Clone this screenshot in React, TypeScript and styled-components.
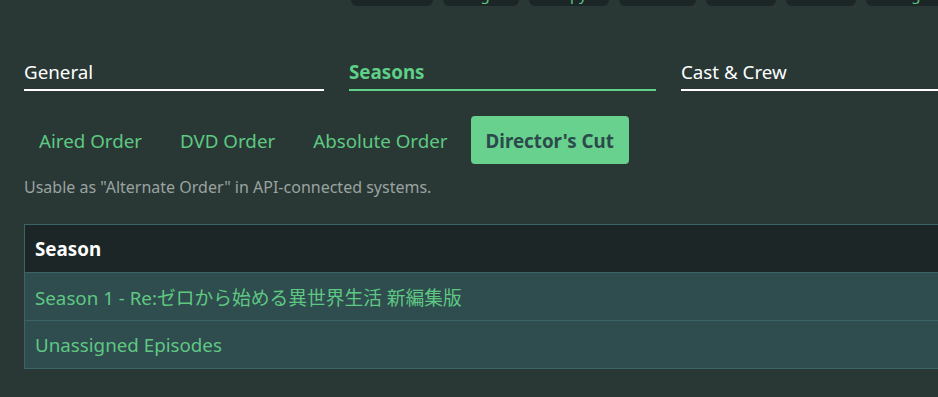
import React, { FC, useState } from 'react';
import styled, { createGlobalStyle } from 'styled-components';

const GlobalStyle = createGlobalStyle`
  html, body {
    margin: 0;
    padding: 0;
    background-color: #293835;
    overflow: hidden;
  }
  body {
    font-family: 'Noto Sans', 'Noto Sans CJK JP', sans-serif;
    color: #ffffff;
  }
`;

const Page = styled.main`
  width: 1100px;
  padding: 0 24px;
  box-sizing: border-box;
`;

// the page is scrolled: only the bottom edge of the action buttons is left in view
const ActionStrip = styled.div`
  display: flex;
  gap: 10px;
  height: 6px;
  overflow: hidden;
  align-items: flex-end;
  margin-left: 327px;
`;

const ActionLink = styled.a<{ $width: number }>`
  flex: none;
  display: block;
  box-sizing: border-box;
  width: ${p => p.$width}px;
  height: 40px;
  padding-top: 21px;
  border-radius: 6px;
  background-color: #1c2626;
  color: #5ec882;
  font-size: 15px;
  line-height: 14px;
  text-align: center;
`;

const TabRow = styled.nav`
  display: flex;
  gap: 25px;
  margin-top: 54px;
`;

const Tab = styled.div<{ $active?: boolean; $width: number }>`
  flex: none;
  width: ${p => p.$width}px;
  padding-bottom: 5px;
  border-bottom: 2px solid ${p => (p.$active ? '#5fd087' : '#ffffff')};
  color: ${p => (p.$active ? '#5fd087' : '#ffffff')};
  font-size: 18.75px;
  font-weight: ${p => (p.$active ? 700 : 400)};
  line-height: 24px;
  cursor: pointer;
`;

const OrderBar = styled.div`
  display: flex;
  gap: 8px;
  margin-top: 25px;
`;

const OrderButton = styled.button<{ $active?: boolean }>`
  height: 48px;
  padding: 0 15px;
  border: none;
  border-radius: 4px;
  background-color: ${p => (p.$active ? '#68d18e' : 'transparent')};
  color: ${p => (p.$active ? '#2c4a4b' : '#5ec882')};
  font-family: inherit;
  font-size: 18.75px;
  font-weight: ${p => (p.$active ? 700 : 400)};
  cursor: pointer;
`;

const Note = styled.p`
  margin: 13px 0 0;
  color: #9aa3a0;
  font-size: 16px;
  line-height: 20px;
`;

const Table = styled.table`
  width: 1000px;
  margin-top: 27px;
  border-collapse: collapse;
  border: 1px solid #3b6468;
`;

const HeadCell = styled.th`
  height: 47px;
  padding: 0 10px;
  background-color: #1c2626;
  color: #ffffff;
  font-size: 18.75px;
  font-weight: 700;
  text-align: left;
  border-bottom: 1px solid #3b6468;
`;

const Cell = styled.td`
  height: 47px;
  padding: 0 10px;
  background-color: #2f4c4f;
  color: #5ec882;
  font-size: 18.75px;
  border-bottom: 1px solid #3b6468;
`;

const actions = [
  { label: 'Overview', width: 82 },
  { label: 'Tags', width: 76 },
  { label: 'Copy', width: 80 },
  { label: 'Lists', width: 77 },
  { label: 'Edit', width: 70 },
  { label: 'Remove', width: 70 },
  { label: 'Logs', width: 90 },
];

const tabs = [
  { label: 'General', width: 300 },
  { label: 'Seasons', width: 307 },
  { label: 'Cast & Crew', width: 307 },
];

const orders = ['Aired Order', 'DVD Order', 'Absolute Order', "Director's Cut"];

const seasons = ['Season 1 - Re:ゼロから始める異世界生活 新編集版', 'Unassigned Episodes'];

const App: FC = () => {
  const [tab, setTab] = useState('Seasons');
  const [order, setOrder] = useState("Director's Cut");

  return (
    <>
      <GlobalStyle />
      <Page>
        <ActionStrip>
          {actions.map(a => (
            <ActionLink key={a.label} $width={a.width}>
              {a.label}
            </ActionLink>
          ))}
        </ActionStrip>

        <TabRow>
          {tabs.map(t => (
            <Tab
              key={t.label}
              $width={t.width}
              $active={t.label === tab}
              onClick={() => setTab(t.label)}
            >
              {t.label}
            </Tab>
          ))}
        </TabRow>

        <OrderBar>
          {orders.map(o => (
            <OrderButton key={o} $active={o === order} onClick={() => setOrder(o)}>
              {o}
            </OrderButton>
          ))}
        </OrderBar>

        <Note>Usable as "Alternate Order" in API-connected systems.</Note>

        <Table>
          <thead>
            <tr>
              <HeadCell>Season</HeadCell>
            </tr>
          </thead>
          <tbody>
            {seasons.map(s => (
              <tr key={s}>
                <Cell>{s}</Cell>
              </tr>
            ))}
          </tbody>
        </Table>
      </Page>
    </>
  );
};

export default App;
